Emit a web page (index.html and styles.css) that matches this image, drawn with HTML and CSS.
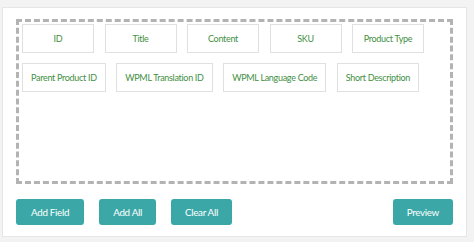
FILE: index.html
```html
<!DOCTYPE html>
<html lang="en">
	<head>
		<meta charset="UTF-8" />
		<meta name="viewport" content="width=device-width, initial-scale=1.0" />
		<title>Field Builder</title>
		<link rel="stylesheet" href="styles.css">
	</head>
	<body>
		<div class="panel">
			<div class="dropZone">
				<div class="field">ID</div>
				<div class="field">Title</div>
				<div class="field">Content</div>
				<div class="field">SKU</div>
				<div class="field">Product Type</div>
				<div class="field">Parent Product ID</div>
				<div class="field">WPML Translation ID</div>
				<div class="field">WPML Language Code</div>
				<div class="field">Short Description</div>
			</div>
			<div class="actions">
				<button class="btn">Add Field</button>
				<button class="btn">Add All</button>
				<button class="btn">Clear All</button>
				<button class="btn preview">Preview</button>
			</div>
		</div>
	</body>
</html>
```

FILE: styles.css
```css
* {
	padding: 0;
	margin: 0;
	box-sizing: border-box;
}
body {
	background: #f3f3f3;
	font-family: "Lato", "Open Sans", sans-serif;
	padding: 7px 7px 5px 2px;
}
.panel {
	background: #fff;
	border: 1px solid #e6e6e6;
	padding: 11px 13px 11px 13px;
	height: 230px;
}
.dropZone {
	border: 3px dashed #b3b3b3;
	height: 165px;
	padding: 2px 4px 2px 3px;
	display: flex;
	flex-wrap: wrap;
	align-content: flex-start;
	gap: 10px 10.5px;
}
.field {
	height: 29px;
	min-width: 72px;
	padding: 0 8px;
	border: 1px solid #e0e0e0;
	color: #3f8f3f;
	font-size: 9px;
	letter-spacing: -0.3px;
	display: flex;
	align-items: center;
	justify-content: center;
}
.actions {
	display: flex;
	gap: 15px;
	margin-top: 15px;
}
.btn {
	height: 26px;
	padding: 0 14px;
	border: none;
	border-radius: 3px;
	background: #3ba8a7;
	color: #fff;
	font-family: inherit;
	font-size: 9.8px;
	letter-spacing: -0.3px;
}
.btn:first-child {
	padding: 0 15px;
}
.preview {
	margin-left: auto;
}
```
